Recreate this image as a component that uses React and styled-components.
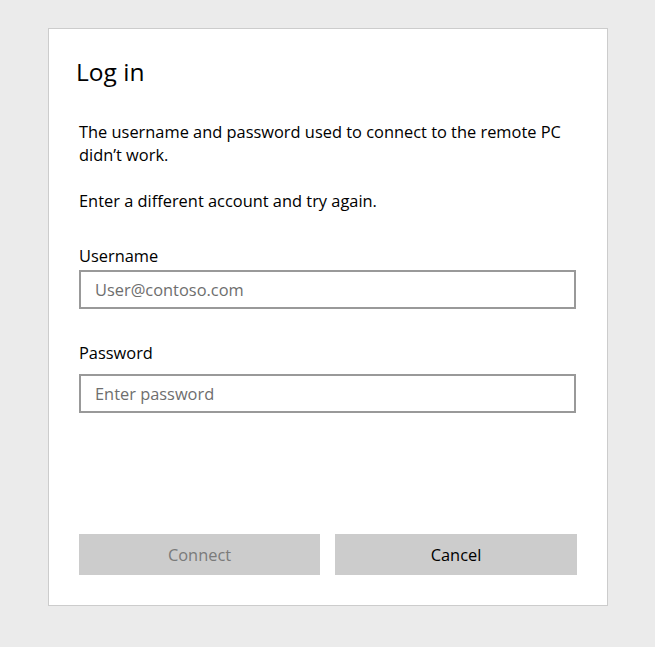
import React from "react";
import styled, { createGlobalStyle } from "styled-components";

const GlobalStyle = createGlobalStyle`
  html, body {
    margin: 0;
    padding: 0;
    background: #ebebeb;
    font-family: "Open Sans", "Noto Sans", sans-serif;
  }
`;

const App = () => {
  return (
    <>
      <GlobalStyle />
      <Page>
        <Dialog>
          <Title>Log in</Title>
          <Message>
            The username and password used to connect to the remote PC didn’t work.
          </Message>
          <Message>Enter a different account and try again.</Message>

          <Field $gap={3}>
            <Label htmlFor="username">Username</Label>
            <Input id="username" type="text" placeholder="User@contoso.com" />
          </Field>

          <Field $gap={10}>
            <Label htmlFor="password">Password</Label>
            <Input id="password" type="password" placeholder="Enter password" />
          </Field>

          <ButtonRow>
            <Button disabled>Connect</Button>
            <Button>Cancel</Button>
          </ButtonRow>
        </Dialog>
      </Page>
    </>
  );
};

const Page = styled.div`
  padding: 28px 0 0 48px;
  min-height: 647px;
  box-sizing: border-box;
`;

const Dialog = styled.div`
  box-sizing: border-box;
  width: 560px;
  height: 578px;
  background: #ffffff;
  border: 1px solid #cccccc;
  padding: 27px 31px 30px 30px;
  display: flex;
  flex-direction: column;
  color: #000000;
`;

const Title = styled.h1`
  margin: 0 0 0 -3px;
  font-size: 24.5px;
  font-weight: 400;
  line-height: 32px;
`;

const Message = styled.p`
  margin: 0;
  font-size: 16.4px;
  line-height: 23px;

  &:first-of-type {
    margin-top: 32px;
  }

  & + & {
    margin-top: 23px;
  }
`;

const Field = styled.div`
  display: flex;
  flex-direction: column;
  gap: ${(props) => props.$gap}px;
  margin-top: 32px;
`;

const Label = styled.label`
  font-size: 16.4px;
  line-height: 23px;
`;

const Input = styled.input`
  box-sizing: border-box;
  width: 100%;
  height: 39px;
  border: 2px solid #999999;
  background: #ffffff;
  padding: 0 14px;
  font-family: inherit;
  font-size: 16.4px;
  color: #000000;
  outline: none;

  &::placeholder {
    color: #6e6e6e;
  }
`;

const ButtonRow = styled.div`
  margin-top: auto;
  display: grid;
  grid-template-columns: 241px 242px;
  column-gap: 15px;
`;

const Button = styled.button`
  height: 41px;
  border: none;
  background: #cccccc;
  font-family: inherit;
  font-size: 16.4px;
  color: #000000;
  padding: 0;

  &:disabled {
    color: #7a7a7a;
  }
`;

export default App;
